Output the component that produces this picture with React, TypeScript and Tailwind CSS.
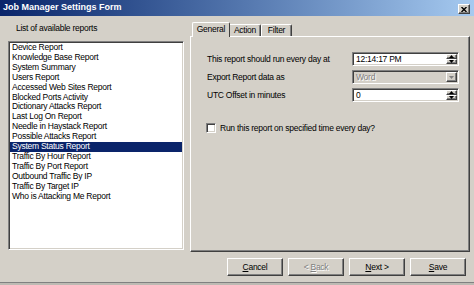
import React from 'react';

const reports = [
  'Device Report',
  'Knowledge Base Report',
  'System Summary',
  'Users Report',
  'Accessed Web Sites Report',
  'Blocked Ports Activity',
  'Dictionary Attacks Report',
  'Last Log On Report',
  'Needle in Haystack Report',
  'Possible Attacks Report',
  'System Status Report',
  'Traffic By Hour Report',
  'Traffic By Port Report',
  'Outbound Traffic By IP',
  'Traffic By Target IP',
  'Who is Attacking Me Report',
];

const raised =
  'border border-t-white border-l-white border-r-[#404040] border-b-[#404040] shadow-[inset_-1px_-1px_0_#808080]';
const sunken =
  'border border-t-[#808080] border-l-[#808080] border-r-white border-b-white shadow-[inset_1px_1px_0_#404040,inset_-1px_-1px_0_#d4d0c8]';

const Arrow: React.FC<{ up?: boolean; gray?: boolean }> = ({ up, gray }) => (
  <svg width="5" height="3" viewBox="0 0 5 3">
    <polygon points={up ? '2.5,0 5,3 0,3' : '0,0 5,0 2.5,3'} fill={gray ? '#808080' : '#000'} />
  </svg>
);

const Spinner: React.FC = () => (
  <div className="flex flex-col w-[11px] h-full">
    <div className={`flex-1 flex items-center justify-center bg-[#d4d0c8] ${raised}`}>
      <Arrow up />
    </div>
    <div className={`flex-1 flex items-center justify-center bg-[#d4d0c8] ${raised}`}>
      <Arrow />
    </div>
  </div>
);

const Btn: React.FC<{ children: React.ReactNode; disabled?: boolean }> = ({ children, disabled }) => (
  <div
    className={`w-[56px] h-[18px] flex items-center justify-center bg-[#d4d0c8] ${raised} ${
      disabled ? 'text-[#808080] [text-shadow:1px_1px_0_#fff]' : 'text-black'
    }`}
  >
    {children}
  </div>
);

export default function App() {
  return (
    <div
      className="w-[474px] h-[285px] bg-[#d4d0c8] flex flex-col overflow-hidden text-[8.5px] tracking-[-0.25px] text-black"
      style={{ fontFamily: '"Liberation Sans", Arial, sans-serif' }}
    >
      {/* title bar */}
      <div className="h-[16px] flex items-center justify-between bg-linear-to-r from-[#0a246a] to-[#a6caf0] pl-[3px] pr-[4px]">
        <span className="text-white font-bold text-[9px] tracking-normal">Job Manager Settings Form</span>
        <div className={`w-[12px] h-[10px] mt-[2px] flex items-center justify-center bg-[#d4d0c8] ${raised}`}>
          <svg width="6" height="5" viewBox="0 0 6 5">
            <path d="M0.5 0 L5.5 5 M5.5 0 L0.5 5" stroke="#000" strokeWidth="1.4" />
          </svg>
        </div>
      </div>

      <div className="flex pt-[6px] pl-[8px]">
        {/* report list */}
        <div className="w-[176px] mt-[1px] flex flex-col">
          <div className="h-[18px] pl-[8px] leading-[10px]">List of available reports</div>
          <div className={`h-[209px] bg-white ${sunken} p-[1px] leading-[9.9px]`}>
            {reports.map((r) => (
              <div
                key={r}
                className={`pl-[2px] whitespace-nowrap ${
                  r === 'System Status Report' ? 'bg-[#0a246a] text-white' : ''
                }`}
              >
                {r}
              </div>
            ))}
          </div>
        </div>

        {/* tabs */}
        <div className="w-[280px] ml-[6px] flex flex-col">
          <div className="h-[14px] flex items-end pl-[2px]">
            <div className="relative z-10 w-[38px] h-[15px] -mb-px flex items-center justify-center bg-[#d4d0c8] border-l border-t border-r border-l-white border-t-white border-r-[#404040] rounded-t-[2px] pb-[2px]">
              General
            </div>
            <div className="w-[31px] h-[12px] flex items-center justify-center border-t border-r border-t-white border-r-[#404040] shadow-[inset_-1px_0_0_#808080] rounded-tr-[2px]">
              Action
            </div>
            <div className="w-[31px] h-[12px] flex items-center justify-center border-l border-t border-r border-l-white border-t-white border-r-[#404040] shadow-[inset_-1px_0_0_#808080] rounded-t-[2px]">
              Filter
            </div>
          </div>
          <div className={`h-[216px] ${raised} pl-[16px] pt-[15px] flex flex-col`}>
            <div className="flex flex-col gap-[4px]">
              <div className="h-[14px] flex items-center">
                <span className="w-[145px]">This report should run every day at</span>
                <div className={`w-[107px] h-[14px] bg-white ${sunken} flex items-stretch p-[1px]`}>
                  <span className="flex-1 pl-[2px] leading-[10px] self-center">12:14:17 PM</span>
                  <Spinner />
                </div>
              </div>
              <div className="h-[14px] flex items-center">
                <span className="w-[145px]">Export Report data as</span>
                <div className={`w-[107px] h-[14px] bg-[#d4d0c8] ${sunken} flex items-stretch p-[1px]`}>
                  <span className="flex-1 pl-[2px] leading-[10px] self-center text-[#808080] [text-shadow:1px_1px_0_#fff]">
                    Word
                  </span>
                  <div className={`w-[11px] flex items-center justify-center bg-[#d4d0c8] ${raised}`}>
                    <Arrow gray />
                  </div>
                </div>
              </div>
              <div className="h-[14px] flex items-center">
                <span className="w-[145px]">UTC Offset in minutes</span>
                <div className={`w-[107px] h-[14px] bg-white ${sunken} flex items-stretch p-[1px]`}>
                  <span className="flex-1 pl-[2px] leading-[10px] self-center">0</span>
                  <Spinner />
                </div>
              </div>
            </div>
            <div className="mt-[21px] -ml-px flex items-center gap-[4px] h-[10px]">
              <div className={`w-[10px] h-[10px] bg-white ${sunken}`} />
              <span>Run this report on specified time every day?</span>
            </div>
          </div>
        </div>
      </div>

      {/* buttons */}
      <div className="mt-[6px] pr-[8px] flex justify-end gap-[5px]">
        <Btn>
          <span><u>C</u>ancel</span>
        </Btn>
        <Btn disabled>
          <span>&lt; <u>B</u>ack</span>
        </Btn>
        <Btn>
          <span><u>N</u>ext &gt;</span>
        </Btn>
        <Btn>
          <span><u>S</u>ave</span>
        </Btn>
      </div>

      <div className="flex-1" />
      <div className="h-[3px] border-t border-t-[#808080] bg-[#bdbab3]" />
    </div>
  );
}
